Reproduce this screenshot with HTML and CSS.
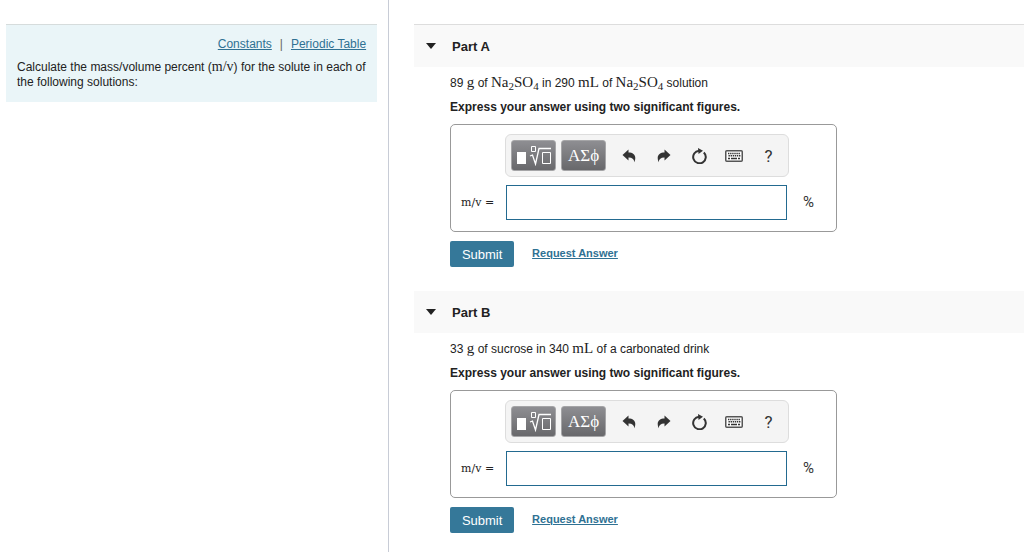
FILE: index.html
```html
<!DOCTYPE html>
<html lang="en">
<head>
    <meta charset="UTF-8">
    <meta name="viewport" content="width=device-width, initial-scale=1.0">
    <title>Mass/Volume Percent</title>
    <link rel="stylesheet" href="styles.css">
</head>
<body>
    <!-- Icons shared by both toolbars -->
    <svg class="sprite" aria-hidden="true">
        <symbol id="icon-template" viewBox="0 0 37 21">
            <path d="M2 7h9v12H2z" fill="#fff"/>
            <path d="M16.500 1.500h4v5h-4zM27.500 7.500h8v11h-8z" fill="none" stroke="#fff"/>
            <path d="M15 11l2.500-1 3 9L24 3.500h12" fill="none" stroke="#fff" stroke-width="1.300"/>
        </symbol>
        <symbol id="icon-undo" viewBox="0 0 14 14">
            <path d="M6.500 0.500v3c5.500 0 8.500 3.500 5.800 9.800C12 10 10 8.500 6.500 8.600v3L0.500 6z" fill="#333"/>
        </symbol>
        <symbol id="icon-reset" viewBox="0 0 16 16">
            <path d="M12.800 4.400A6.300 6.300 0 1 1 8 2.700" fill="none" stroke="#333" stroke-width="2"/>
            <path d="M7 0l5 2.800L7.500 6z" fill="#333"/>
        </symbol>
        <symbol id="icon-keyboard" viewBox="0 0 18 12">
            <rect x="0.750" y="0.750" width="16.500" height="10.500" rx="1" fill="#fff" stroke="#555" stroke-width="1.500"/>
            <path d="M3 3.500h12M3.500 5.800h12" stroke="#333" stroke-width="1.500" stroke-dasharray="1.400 .7"/>
            <path d="M3 8.500h2M6 8.500h6M13 8.500h2" stroke="#333" stroke-width="1.500"/>
        </symbol>
    </svg>

    <aside class="sidebar">
        <div class="problem">
            <nav class="problem-links">
                <a href="#constants">Constants</a>
                <span class="divider">|</span>
                <a href="#periodic-table">Periodic Table</a>
            </nav>
            <p>Calculate the mass/volume percent (<span class="math">m/v</span>) for the solute in each of the following solutions:</p>
        </div>
    </aside>

    <main class="parts">
        <section class="part">
            <h2 class="part-header"><button class="toggle" aria-expanded="true"><span class="caret"></span>Part A</button></h2>
            <form class="part-body">
                <p class="question">89 <span class="math">g</span> of <span class="math">Na<sub>2</sub>SO<sub>4</sub></span> in 290 <span class="math">mL</span> of <span class="math">Na<sub>2</sub>SO<sub>4</sub></span> solution</p>
                <p class="instruction">Express your answer using two significant figures.</p>
                <div class="answer-box">
                    <div class="toolbar">
                        <button type="button" class="tool-dark" aria-label="Templates"><svg class="template"><use href="#icon-template"/></svg></button>
                        <button type="button" class="tool-dark">ΑΣϕ</button>
                        <button type="button" class="tool" aria-label="Undo"><svg class="arrow"><use href="#icon-undo"/></svg></button>
                        <button type="button" class="tool" aria-label="Redo"><svg class="arrow redo"><use href="#icon-undo"/></svg></button>
                        <button type="button" class="tool" aria-label="Reset"><svg class="reset"><use href="#icon-reset"/></svg></button>
                        <button type="button" class="tool" aria-label="Keyboard shortcuts"><svg class="keyboard"><use href="#icon-keyboard"/></svg></button>
                        <button type="button" class="tool">?</button>
                    </div>
                    <label for="answer-a">m/v =</label>
                    <input type="text" id="answer-a" class="answer">
                    <span class="unit">%</span>
                </div>
                <div class="actions">
                    <button type="submit" class="submit">Submit</button>
                    <a href="#answer-a">Request Answer</a>
                </div>
            </form>
        </section>

        <section class="part">
            <h2 class="part-header"><button class="toggle" aria-expanded="true"><span class="caret"></span>Part B</button></h2>
            <form class="part-body">
                <p class="question">33 <span class="math">g</span> of sucrose in 340 <span class="math">mL</span> of a carbonated drink</p>
                <p class="instruction">Express your answer using two significant figures.</p>
                <div class="answer-box">
                    <div class="toolbar">
                        <button type="button" class="tool-dark" aria-label="Templates"><svg class="template"><use href="#icon-template"/></svg></button>
                        <button type="button" class="tool-dark">ΑΣϕ</button>
                        <button type="button" class="tool" aria-label="Undo"><svg class="arrow"><use href="#icon-undo"/></svg></button>
                        <button type="button" class="tool" aria-label="Redo"><svg class="arrow redo"><use href="#icon-undo"/></svg></button>
                        <button type="button" class="tool" aria-label="Reset"><svg class="reset"><use href="#icon-reset"/></svg></button>
                        <button type="button" class="tool" aria-label="Keyboard shortcuts"><svg class="keyboard"><use href="#icon-keyboard"/></svg></button>
                        <button type="button" class="tool">?</button>
                    </div>
                    <label for="answer-b">m/v =</label>
                    <input type="text" id="answer-b" class="answer">
                    <span class="unit">%</span>
                </div>
                <div class="actions">
                    <button type="submit" class="submit">Submit</button>
                    <a href="#answer-b">Request Answer</a>
                </div>
            </form>
        </section>
    </main>
</body>
</html>
```
FILE: styles.css
```css
* {
    box-sizing: border-box;
}

body {
    margin: 0;
    min-height: 100vh;
    display: flex;
    background: #fff;
    color: #222;
    font-family: "Liberation Sans", Arial, sans-serif;
    font-size: 12px;
    line-height: 15px;
}

p, h2 {
    margin: 0;
}

a {
    color: #2f7193;
}

button {
    padding: 0;
    border: none;
    font-family: inherit;
    cursor: pointer;
}

.sprite {
    display: none;
}

/* line-height stays small so formulas don't push the lines apart */
.math {
    font-family: "Liberation Serif", "Times New Roman", serif;
    font-size: 14px;
    line-height: 10px;
}

.question .math {
    font-size: 15px;
}

.math sub {
    font-size: 11px;
    line-height: 0;
    vertical-align: -3px;
}

/* left column */
.sidebar {
    width: 38%;
    padding: 24px 11px 24px 6px;
    border-right: 1px solid #c8ccd6;
}

.problem {
    padding: 12px 11px;
    background: #eaf5f8;
    border-top: 1px solid #d6dcdc;
}

.problem-links {
    display: flex;
    justify-content: flex-end;
    gap: 8px;
    margin-bottom: 8px;
}

.divider {
    color: #666;
}

/* right column */
.parts {
    flex: 1;
    padding: 24px 0 0 25px;
}

.part {
    margin-bottom: 24px;
}

.part:first-child .part-header {
    border-top: 1px solid #ddd;
}

.part-header {
    background: #f9f9f9;
}

.toggle {
    display: flex;
    align-items: center;
    gap: 16px;
    width: 100%;
    height: 42px;
    padding-left: 12px;
    background: none;
    color: #222;
    font-size: 13px;
    font-weight: bold;
}

.caret {
    border: 5px solid transparent;
    border-top: 6px solid #222;
    border-bottom: none;
}

.part-body {
    padding: 9px 36px 0;
}

.question {
    margin-bottom: 9px;
}

.instruction {
    margin-bottom: 9px;
    font-weight: bold;
}

.answer-box {
    display: grid;
    grid-template-columns: 44px 283px auto;
    align-items: center;
    row-gap: 8px;
    width: 387px;
    padding: 9px 10px 11px;
    border: 1px solid #999;
    border-radius: 5px;
}

.answer-box label {
    font-family: "DejaVu Serif", serif;
    font-size: 11px;
}

.toolbar {
    grid-column: 2 / 4;
    justify-self: start;
    display: flex;
    align-items: center;
    height: 43px;
    padding: 0 2px 0 5px;
    background: #f4f4f4;
    border: 1px solid #ddd;
    border-radius: 6px;
}

.tool-dark {
    display: flex;
    align-items: center;
    justify-content: center;
    width: 45px;
    height: 31px;
    margin-right: 5px;
    background: linear-gradient(#8e8e92, #68686b);
    border: 1px solid #a5a5a7;
    border-radius: 3px;
    color: #fff;
    font-family: "Liberation Serif", serif;
    font-size: 17px;
}

.tool {
    display: flex;
    align-items: center;
    justify-content: center;
    width: 35px;
    height: 30px;
    background: none;
    color: #333;
    font-family: Roboto, sans-serif;
    font-size: 17px;
}

.template {
    width: 37px;
    height: 21px;
}

.arrow {
    width: 14px;
    height: 14px;
}

.redo {
    transform: scaleX(-1);
}

.reset {
    width: 16px;
    height: 16px;
}

.keyboard {
    width: 18px;
    height: 12px;
}

.answer {
    width: 281px;
    height: 35px;
    justify-self: center;
    padding: 0 8px;
    border: 1px solid #236a90;
    font-size: 14px;
}

.unit {
    padding-left: 15px;
    color: #333;
    font-family: Roboto, sans-serif;
    font-size: 15px;
}

.actions {
    display: flex;
    gap: 18px;
    margin-top: 9px;
}

.actions a {
    font-size: 11px;
    font-weight: bold;
    line-height: 24px;
}

.submit {
    width: 64px;
    height: 26px;
    background: #357899;
    border-radius: 2px;
    color: #fff;
    font-size: 13px;
}
```
